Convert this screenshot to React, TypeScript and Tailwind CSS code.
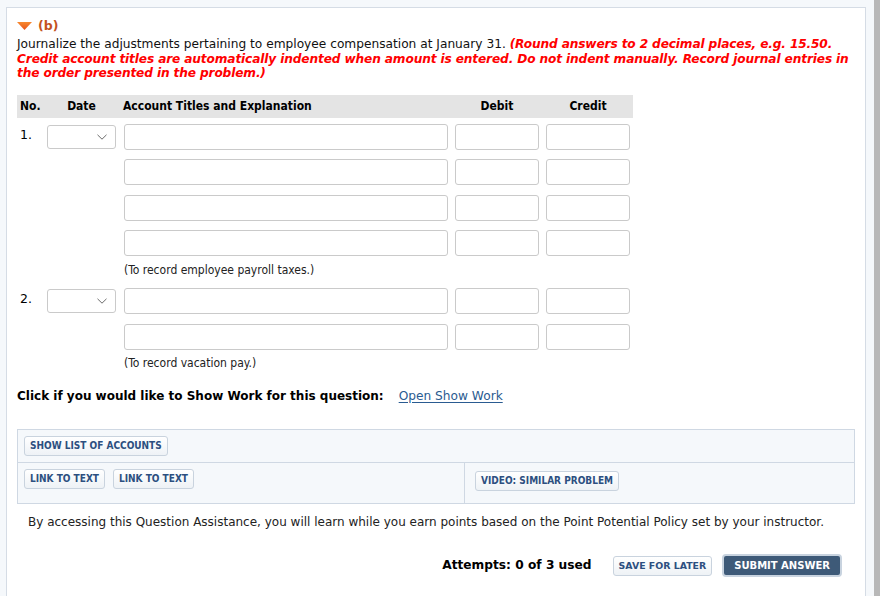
import React from "react";

const verdana = "font-['DejaVu_Sans',sans-serif]";
const tahoma = "font-['DejaVu_Sans_Condensed','DejaVu_Sans',sans-serif]";

function DateSelect() {
  return (
    <div className="relative mt-[1px] h-[24px] w-[69px] rounded-[3px] border border-[#cacaca] bg-white">
      <svg
        className="absolute right-[8px] top-[8px]"
        width="10"
        height="6"
        viewBox="0 0 10 6"
        fill="none"
      >
        <path d="M0.5 0.8 L5 5.2 L9.5 0.8" stroke="#6b6b6b" strokeWidth="1" />
      </svg>
    </div>
  );
}

function Box({ w }: { w: string }) {
  return <div className={`h-[26px] rounded-[3px] border border-[#cacaca] bg-white ${w}`} />;
}

function EntryLine({ no }: { no?: string }) {
  return (
    <div className="flex h-[26px] items-start">
      <div className={`w-[30px] pl-[3px] pt-[3px] text-[12.5px] leading-[16px] text-black ${verdana}`}>
        {no}
      </div>
      <div className="w-[69px]">{no ? <DateSelect /> : null}</div>
      <div className="ml-[8px]">
        <Box w="w-[324px]" />
      </div>
      <div className="ml-[7px]">
        <Box w="w-[84px]" />
      </div>
      <div className="ml-[7px]">
        <Box w="w-[84px]" />
      </div>
    </div>
  );
}

function Entry({ no, lines, note }: { no: string; lines: number; note: string }) {
  return (
    <div className="flex flex-col">
      <div className="flex flex-col gap-[9.5px]">
        {Array.from({ length: lines }).map((_, i) => (
          <EntryLine key={i} no={i === 0 ? no : undefined} />
        ))}
      </div>
      <div className={`ml-[107px] mt-[5.5px] text-[12px] leading-[16px] text-[#222] ${tahoma}`}>
        {note}
      </div>
    </div>
  );
}

function AssistButton({ children }: { children: React.ReactNode }) {
  return (
    <button
      className={`h-[20px] rounded-[3px] border border-[#c9d3de] bg-gradient-to-b from-white to-[#eef2f6] px-[5px] text-[10px] font-bold leading-[18px] text-[#2c4f80] ${tahoma}`}
    >
      {children}
    </button>
  );
}

export default function App() {
  return (
    <div className="flex min-h-[596px] w-[880px] bg-[#f5f8fb]">
      <div className="flex-1 pl-[6px] pr-[8px] pt-[7px]">
        <div className="min-h-[600px] border border-[#d5dce5] bg-white pb-[20px] pl-[10px] pr-[10px] pt-[10px]">
          {/* part header */}
          <div className="flex h-[16px] items-center gap-[6px]">
            <svg width="15" height="8" viewBox="0 0 15 8">
              <defs>
                <linearGradient id="tri" x1="0" y1="0" x2="0" y2="1">
                  <stop offset="0" stopColor="#f7892f" />
                  <stop offset="1" stopColor="#e8541a" />
                </linearGradient>
              </defs>
              <path d="M0 0 H15 L7.5 8 Z" fill="url(#tri)" />
            </svg>
            <span className={`text-[12.5px] font-bold text-[#c4521d] ${verdana}`}>(b)</span>
          </div>

          <p className={`mt-[3px] whitespace-nowrap text-[12.2px] leading-[14.5px] text-[#111] ${verdana}`}>
            Journalize the adjustments pertaining to employee compensation at January 31.{" "}
            <span className="font-bold italic tracking-[-0.15px] text-[#ff0000]">
              (Round answers to 2 decimal places, e.g. 15.50.
              <br />
              Credit account titles are automatically indented when amount is entered. Do not indent manually. Record journal entries in
              <br />
              the order presented in the problem.)
            </span>
          </p>

          {/* journal table */}
          <div
            className={`mt-[14px] flex h-[23px] w-[616px] items-center bg-[#e4e4e4] text-[12px] font-bold text-black ${tahoma}`}
          >
            <div className="w-[30px] pl-[3px]">No.</div>
            <div className="w-[69px] text-center">Date</div>
            <div className="ml-[7px] w-[325px]">Account Titles and Explanation</div>
            <div className="ml-[7px] w-[84px] text-center">Debit</div>
            <div className="ml-[7px] w-[84px] text-center">Credit</div>
          </div>

          <div className="mt-[6px] flex flex-col gap-[10.5px]">
            <Entry no="1." lines={4} note="(To record employee payroll taxes.)" />
            <Entry no="2." lines={2} note="(To record vacation pay.)" />
          </div>

          <div className={`mt-[16.5px] flex items-center leading-[16px] ${verdana}`}>
            <span className="text-[12px] font-bold text-black">Click if you would like to Show Work for this question:</span>
            <a className="ml-[15px] text-[12.2px] text-[#2a5b91] underline underline-offset-2">Open Show Work</a>
          </div>

          {/* question assistance */}
          <div className="mt-[25.5px] border border-[#cfd8e3] bg-[#f5f8fb]">
            <div className="flex px-[6px] py-[6px]">
              <AssistButton>SHOW LIST OF ACCOUNTS</AssistButton>
            </div>
            <div className="flex border-t border-[#cfd8e3]">
              <div className="flex h-[40px] w-[447px] gap-[8px] border-r border-[#cfd8e3] px-[6px] pt-[6px]">
                <AssistButton>LINK TO TEXT</AssistButton>
                <AssistButton>LINK TO TEXT</AssistButton>
              </div>
              <div className="flex pl-[10px] pt-[8px]">
                <AssistButton>VIDEO: SIMILAR PROBLEM</AssistButton>
              </div>
            </div>
          </div>

          <p className={`mt-[10px] whitespace-nowrap pl-[11px] text-[12px] leading-[16px] text-[#222] ${verdana}`}>
            By accessing this Question Assistance, you will learn while you earn points based on the Point Potential Policy set by your instructor.
          </p>

          <div className="mt-[24px] flex items-center justify-end pr-[13px]">
            <span className={`text-[12.2px] font-bold text-black ${verdana}`}>Attempts: 0 of 3 used</span>
            <button
              className={`ml-[21px] h-[20px] rounded-[3px] border border-[#c9d3de] bg-gradient-to-b from-white to-[#eef2f6] px-[5px] text-[9.4px] font-bold leading-[18px] text-[#2c4f80] ${verdana}`}
            >
              SAVE FOR LATER
            </button>
            <button
              className={`ml-[10px] h-[23px] rounded-[4px] border-2 border-[#c8d3df] bg-[#3e5a78] px-[10px] text-[10px] font-bold leading-[19px] text-white ${verdana}`}
            >
              SUBMIT ANSWER
            </button>
          </div>
        </div>
      </div>
      <div className="w-[6px] bg-[#b8b8b8]" />
    </div>
  );
}
